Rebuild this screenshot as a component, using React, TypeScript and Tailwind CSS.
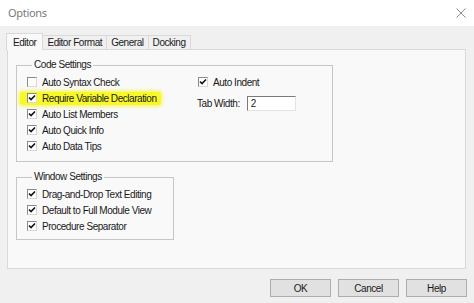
import React from "react";

function Check({ checked }: { checked: boolean }) {
  return (
    <span className="w-[10px] h-[10px] bg-white border-l border-t border-[#8a8a8a] border-r border-b border-r-[#d8d8d8] border-b-[#d8d8d8] flex items-center justify-center shrink-0">
      {checked && (
        <svg width="8" height="8" viewBox="0 0 8 8">
          <path d="M1 3.5 L3 5.5 L7 1.5" stroke="#111" strokeWidth="1.6" fill="none" />
        </svg>
      )}
    </span>
  );
}

function Option({ label, checked, highlight }: { label: string; checked: boolean; highlight?: boolean }) {
  if (highlight) {
    return (
      <div className="h-[16px] flex items-center">
        <div className="-ml-[7px] pl-[7px] pr-[4px] h-[13px] flex items-center gap-[5px] bg-[#f7f72a] rounded-[3px] shadow-[0_0_3px_2px_rgba(247,247,42,0.6)]">
          <Check checked={checked} />
          <span className="whitespace-nowrap">{label}</span>
        </div>
      </div>
    );
  }
  return (
    <div className="h-[16px] flex items-center gap-[5px]">
      <Check checked={checked} />
      <span className="whitespace-nowrap">{label}</span>
    </div>
  );
}

function Button({ label }: { label: string }) {
  return (
    <div className="w-[61px] h-[18px] bg-[#e1e1e1] border border-[#adadad] flex items-center justify-center">
      {label}
    </div>
  );
}

export default function App() {
  const tabs = ["Editor", "Editor Format", "General", "Docking"];
  return (
    <div className="w-[474px] h-[303px] bg-[#f0f0f0] overflow-hidden font-['Liberation_Sans',sans-serif] text-[10px] tracking-[-0.45px] text-[#1a1a1a] flex flex-col">
      <div className="h-[26px] bg-white flex items-center justify-between pl-[8px] pr-[8px] shrink-0">
        <span className="text-[11px] tracking-[-0.3px] text-[#7a7a7a] font-['Noto_Sans',sans-serif]">Options</span>
        <svg width="10" height="10" viewBox="0 0 10 10">
          <path d="M0.5 0.5 L9.5 9.5 M9.5 0.5 L0.5 9.5" stroke="#8a8a8a" strokeWidth="1" />
        </svg>
      </div>

      <div className="pl-[7px] pr-[8px] pt-[6px]">
        <div className="flex items-end h-[17px] -ml-px">
          {tabs.map((t, i) =>
            i === 0 ? (
              <div
                key={t}
                className="h-[17px] px-[6px] bg-[#f9f9f9] border border-b-0 border-[#d9d9d9] flex items-center relative z-10 -mb-px"
              >
                {t}
              </div>
            ) : (
              <div
                key={t}
                className="h-[14px] px-[4px] bg-[#f0f0f0] border border-b-0 border-l-0 border-[#d9d9d9] flex items-center whitespace-nowrap"
              >
                {t}
              </div>
            )
          )}
        </div>

        <div className="h-[220px] border border-[#d9d9d9] bg-[#f9f9f9] px-[8px] pt-[9px]">
          <fieldset className="w-[317px] h-[103px] border border-[#c6c6c6] px-[10px] pb-0">
            <legend className="ml-[5px] px-[2px] leading-[12px]">Code Settings</legend>
            <div className="flex pt-[3px]">
              <div className="w-[171px] flex flex-col">
                <Option label="Auto Syntax Check" checked={false} />
                <Option label="Require Variable Declaration" checked highlight />
                <Option label="Auto List Members" checked />
                <Option label="Auto Quick Info" checked />
                <Option label="Auto Data Tips" checked />
              </div>
              <div className="flex flex-col">
                <Option label="Auto Indent" checked />
                <div className="flex items-center gap-[7px] mt-[6px]">
                  <span className="-ml-px">Tab Width:</span>
                  <div className="w-[49px] h-[15px] bg-white border border-[#7a7a7a] border-r-[#e3e3e3] border-b-[#e3e3e3] flex items-center pl-[3px]">
                    2
                  </div>
                </div>
              </div>
            </div>
          </fieldset>

          <fieldset className="w-[158px] h-[69px] mt-[9px] border border-[#c6c6c6] px-[10px]">
            <legend className="ml-[5px] px-[2px] leading-[12px]">Window Settings</legend>
            <div className="flex flex-col pt-[3px]">
              <Option label="Drag-and-Drop Text Editing" checked />
              <Option label="Default to Full Module View" checked />
              <Option label="Procedure Separator" checked />
            </div>
          </fieldset>
        </div>

        <div className="flex justify-end gap-[7px] pt-[10px] -mr-px">
          <Button label="OK" />
          <Button label="Cancel" />
          <Button label="Help" />
        </div>
      </div>
    </div>
  );
}
